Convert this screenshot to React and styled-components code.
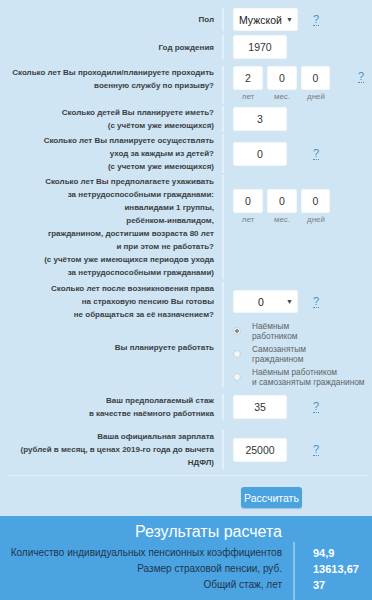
import styled, { createGlobalStyle } from "styled-components";

const GlobalStyle = createGlobalStyle`
  body {
    margin: 0;
    font-family: "Liberation Sans", Arial, sans-serif;
  }
`;

const Page = styled.div`
  width: 372px;
  min-height: 100vh;
  display: flex;
  flex-direction: column;
  background: #cfe5f3;
`;

const Form = styled.div`
  padding-top: 6px;
`;

const Row = styled.div`
  display: grid;
  grid-template-columns: 222px 1fr;
  padding: ${(p) => p.$pt || 0}px 0 ${(p) => p.$pb || 0}px;
`;

const Label = styled.div`
  align-self: ${(p) => (p.$top ? "start" : "center")};
  padding: ${(p) => p.$pt || 0}px 8px 0 0;
  text-align: right;
  font-size: 8px;
  font-weight: bold;
  line-height: 13px;
  color: #3b3f44;
`;

const Field = styled.div`
  display: grid;
  grid-template-columns: ${(p) => p.$col || 80}px auto;
  justify-content: start;
  align-items: ${(p) => (p.$top ? "start" : "center")};
  padding: ${(p) => p.$pt || 0}px 0 0 9px;
  border-left: 2px solid #e3f0f9;
`;

const TextInput = styled.input`
  box-sizing: border-box;
  width: ${(p) => p.$w || 54}px;
  height: 24px;
  border: 1px solid #f3f7fa;
  border-radius: 2px;
  background: #fff;
  text-align: center;
  font-family: inherit;
  font-size: 10.5px;
  color: #333;
  padding: 0;
  outline: none;
`;

const Select = styled.div`
  box-sizing: border-box;
  width: 65px;
  height: 23px;
  display: flex;
  align-items: center;
  justify-content: space-between;
  padding: 0 4px 0 ${(p) => p.$pl || 5}px;
  background: #fff;
  border: 1px solid #f3f7fa;
  border-radius: 2px;
  font-size: 10.5px;
  color: #222;
`;

const Arrow = styled.span`
  font-size: 7px;
  color: #444;
`;

const Help = styled.span`
  justify-self: start;
  align-self: ${(p) => (p.$mt ? "start" : "center")};
  margin-top: ${(p) => p.$mt || 0}px;
  font-size: 11px;
  line-height: 11px;
  color: #4a8fc9;
  border-bottom: 1px dotted #4a8fc9;
`;

const Triple = styled.div`
  display: grid;
  grid-template-columns: repeat(3, 30px);
  column-gap: 4px;
`;

const Unit = styled.span`
  text-align: center;
  font-size: 8px;
  line-height: 14px;
  color: #7a7f85;
`;

const Radios = styled.div`
  display: flex;
  flex-direction: column;
  gap: 3px;
  padding-left: 9px;
  border-left: 2px solid #e3f0f9;
`;

const Option = styled.div`
  display: flex;
  align-items: center;
  gap: 11px;
`;

const Circle = styled.span`
  box-sizing: border-box;
  width: 8px;
  height: 8px;
  border-radius: 50%;
  border: 1px solid #c9d3db;
  background: ${(p) => (p.$on ? "radial-gradient(circle, #8c8c8c 0 1.6px, #f3f5f7 2px)" : "#f3f5f7")};
`;

const OptionText = styled.span`
  font-size: 8.3px;
  line-height: 10px;
  color: #5f6468;
`;

const Rule = styled.div`
  height: 1px;
  margin: 5px 5px 0 8px;
  background: #e2eff8;
`;

const ButtonRow = styled.div`
  padding: 11px 0 8px 241px;
`;

const Button = styled.button`
  width: 61px;
  height: 21px;
  padding: 0;
  border: none;
  border-radius: 3px;
  background: #4aa3df;
  color: #fff;
  font-family: inherit;
  font-size: 10.5px;
  box-shadow: 0 1px 1px rgba(40, 90, 130, 0.25);
`;

const Results = styled.div`
  flex: 1;
  display: grid;
  grid-template-columns: 293px 1fr;
  grid-template-rows: auto auto auto 1fr;
  background: #4ba4e1;
`;

const Title = styled.div`
  grid-column: 1;
  padding: 6px 11px 0 0;
  text-align: right;
  font-size: 16px;
  line-height: 20px;
  color: #fff;
`;

const Spacer = styled.div``;

const ResLabel = styled.div`
  padding: ${(p) => p.$pt || 0}px 11px 0 0;
  text-align: right;
  font-size: 10px;
  line-height: 16px;
  color: #1d3650;
`;

const ResValue = styled.div`
  padding: ${(p) => p.$pt || 0}px 0 0 18px;
  border-left: 2px solid #86c5ee;
  font-size: 11px;
  font-weight: bold;
  line-height: 16px;
  color: #fff;
`;

function Br() {
  return <br />;
}

export default function App() {
  return (
    <Page>
      <GlobalStyle />
      <Form>
        <Row $pt={2} $pb={2}>
          <Label>Пол</Label>
          <Field>
            <Select>
              Мужской <Arrow>▼</Arrow>
            </Select>
            <Help>?</Help>
          </Field>
        </Row>

        <Row $pt={2} $pb={2}>
          <Label>Год рождения</Label>
          <Field>
            <TextInput defaultValue="1970" />
          </Field>
        </Row>

        <Row $pt={5} $pb={2}>
          <Label $top>
            Сколько лет Вы проходили/планируете проходить
            <Br />
            военную службу по призыву?
          </Label>
          <Field $col={125} $top>
            <Triple>
              <TextInput $w={30} defaultValue="2" />
              <TextInput $w={30} defaultValue="0" />
              <TextInput $w={29} defaultValue="0" />
              <Unit>лет</Unit>
              <Unit>мес.</Unit>
              <Unit>дней</Unit>
            </Triple>
            <Help $mt={5}>?</Help>
          </Field>
        </Row>

        <Row $pb={1}>
          <Label>
            Сколько детей Вы планируете иметь?
            <Br />
            (с учётом уже имеющихся)
          </Label>
          <Field>
            <TextInput defaultValue="3" />
          </Field>
        </Row>

        <Row $pt={1} $pb={1}>
          <Label>
            Сколько лет Вы планируете осуществлять
            <Br />
            уход за каждым из детей?
            <Br />
            (с учетом уже имеющихся)
          </Label>
          <Field>
            <TextInput defaultValue="0" />
            <Help>?</Help>
          </Field>
        </Row>

        <Row $pt={1} $pb={1}>
          <Label>
            Сколько лет Вы предполагаете ухаживать
            <Br />
            за нетрудоспособными гражданами:
            <Br />
            инвалидами 1 группы,
            <Br />
            ребёнком-инвалидом,
            <Br />
            гражданином, достигшим возраста 80 лет
            <Br />
            и при этом не работать?
            <Br />
            (с учётом уже имеющихся периодов ухода
            <Br />
            за нетрудоспособными гражданами)
          </Label>
          <Field $col={125} $top $pt={14}>
            <Triple>
              <TextInput $w={30} defaultValue="0" />
              <TextInput $w={30} defaultValue="0" />
              <TextInput $w={29} defaultValue="0" />
              <Unit>лет</Unit>
              <Unit>мес.</Unit>
              <Unit>дней</Unit>
            </Triple>
          </Field>
        </Row>

        <Row $pt={2}>
          <Label>
            Сколько лет после возникновения права
            <Br />
            на страховую пенсию Вы готовы
            <Br />
            не обращаться за её назначением?
          </Label>
          <Field>
            <Select $pl={24}>
              0 <Arrow>▼</Arrow>
            </Select>
            <Help>?</Help>
          </Field>
        </Row>

        <Row $pb={2}>
          <Label $top $pt={20}>
            Вы планируете работать
          </Label>
          <Radios>
            <Option>
              <Circle $on />
              <OptionText>
                Наёмным
                <Br />
                работником
              </OptionText>
            </Option>
            <Option>
              <Circle />
              <OptionText>
                Самозанятым
                <Br />
                гражданином
              </OptionText>
            </Option>
            <Option>
              <Circle />
              <OptionText>
                Наёмным работником
                <Br />
                и самозанятым гражданином
              </OptionText>
            </Option>
          </Radios>
        </Row>

        <Row $pt={5} $pb={2}>
          <Label>
            Ваш предполагаемый стаж
            <Br />
            в качестве наёмного работника
          </Label>
          <Field>
            <TextInput defaultValue="35" />
            <Help>?</Help>
          </Field>
        </Row>

        <Row $pt={8} $pb={1}>
          <Label>
            Ваша официальная зарплата
            <Br />
            (рублей в месяц, в ценах 2019-го года до вычета
            <Br />
            НДФЛ)
          </Label>
          <Field>
            <TextInput defaultValue="25000" />
            <Help>?</Help>
          </Field>
        </Row>

        <Rule />
        <ButtonRow>
          <Button>Рассчитать</Button>
        </ButtonRow>
      </Form>

      <Results>
        <Title>Результаты расчета</Title>
        <Spacer />
        <ResLabel $pt={3}>Количество индивидуальных пенсионных коэффициентов</ResLabel>
        <ResValue $pt={3}>94,9</ResValue>
        <ResLabel>Размер страховой пенсии, руб.</ResLabel>
        <ResValue>13613,67</ResValue>
        <ResLabel>Общий стаж, лет</ResLabel>
        <ResValue>37</ResValue>
      </Results>
    </Page>
  );
}
